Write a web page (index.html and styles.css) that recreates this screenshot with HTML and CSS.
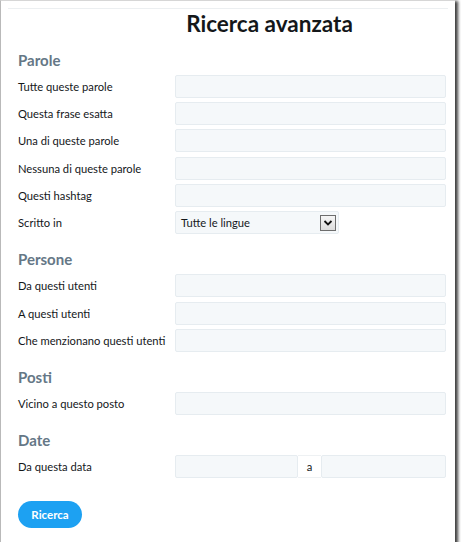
FILE: index.html
```html
<!DOCTYPE html>
<html lang="it">
<head>
<meta charset="utf-8">
<title>Ricerca avanzata</title>
<link rel="stylesheet" href="styles.css">
</head>
<body>
<div class="window">
  <div class="topline"></div>
  <h1 class="title">Ricerca avanzata</h1>

  <section class="section">
    <h2 class="heading">Parole</h2>
    <div class="rows">
      <label class="label">Tutte queste parole</label><div class="input"></div>
      <label class="label">Questa frase esatta</label><div class="input"></div>
      <label class="label">Una di queste parole</label><div class="input"></div>
      <label class="label">Nessuna di queste parole</label><div class="input"></div>
      <label class="label">Questi hashtag</label><div class="input"></div>
      <label class="label">Scritto in</label>
      <div class="select-wrap">
        <div class="select"><span class="select-text">Tutte le lingue</span><span class="arrow"><svg width="10" height="8" viewBox="0 0 10 8"><path d="M1.5 2 L5 5.5 L8.5 2" fill="none" stroke="#111" stroke-width="1.8"/></svg></span></div>
      </div>
    </div>
  </section>

  <section class="section">
    <h2 class="heading">Persone</h2>
    <div class="rows">
      <label class="label">Da questi utenti</label><div class="input"></div>
      <label class="label">A questi utenti</label><div class="input"></div>
      <label class="label">Che menzionano questi utenti</label><div class="input"></div>
    </div>
  </section>

  <section class="section">
    <h2 class="heading">Posti</h2>
    <div class="rows">
      <label class="label">Vicino a questo posto</label><div class="input"></div>
    </div>
  </section>

  <section class="section">
    <h2 class="heading">Date</h2>
    <div class="rows">
      <label class="label">Da questa data</label>
      <div class="daterow"><div class="input date-a"></div><span class="sep">a</span><div class="input date-b"></div></div>
    </div>
  </section>

  <div class="actions"><button class="btn" type="button">Ricerca</button></div>
</div>
</body>
</html>
```
FILE: styles.css
```css
html, body {
  margin: 0;
  padding: 0;
  background: #ffffff;
}
body {
  font-family: Lato, "Open Sans", sans-serif;
  color: #14171a;
}
.window {
  box-sizing: border-box;
  width: 455px;
  height: 542px;
  background: #fff;
  border-left: 1px solid #b9b9b9;
  border-top: 1px solid #d6d6d6;
  box-shadow: 2px 2px 3px 1px rgba(0, 0, 0, 0.75);
  padding-top: 7px;
}
.topline {
  margin: 0 7px 0 7px;
  height: 0;
  border-top: 1px solid #eceff1;
}
.title {
  margin: 0 0 0 7px;
  padding-left: 83px;
  text-align: center;
  font-size: 22.5px;
  line-height: 30px;
  font-weight: 700;
  color: #14171a;
  width: 440px;
  box-sizing: border-box;
}
.section {
  padding-left: 17px;
  margin-top: 15.8px;
}
.section:first-of-type { margin-top: 11.5px; }
.heading {
  margin: 0 0 6px 0;
  font-size: 15px;
  line-height: 18px;
  font-weight: 700;
  color: #657786;
}
.rows {
  display: grid;
  grid-template-columns: 157px 271px;
  grid-auto-rows: 23px;
  row-gap: 4.4px;
  align-items: center;
}
.label {
  font-size: 11.2px;
  line-height: 23px;
  color: #14171a;
  white-space: nowrap;
}
.input {
  box-sizing: border-box;
  height: 23px;
  background: #f5f8fa;
  border: 1px solid #e6ecf0;
  border-radius: 2px;
}
.select-wrap { display: flex; }
.select {
  box-sizing: border-box;
  width: 164px;
  height: 23px;
  background: #f5f8fa;
  border: 1px solid #e6ecf0;
  border-radius: 2px;
  display: flex;
  align-items: center;
  justify-content: space-between;
  padding: 0 2px 0 5px;
  font-size: 11.2px;
}
.arrow {
  box-sizing: border-box;
  width: 16px;
  height: 16px;
  border: 1px solid #6d6d6d;
  background: linear-gradient(#f6f6f6, #dcdcdc);
  display: flex;
  align-items: center;
  justify-content: center;
}
.daterow {
  display: flex;
  align-items: stretch;
}
.date-a { width: 123px; }
.date-b { flex: 1; }
.sep {
  box-sizing: border-box;
  width: 23px;
  height: 23px;
  border-top: 1px solid #eef1f3;
  border-bottom: 1px solid #eef1f3;
  font-size: 11.2px;
  line-height: 21px;
  text-align: center;
  background: #fff;
}
.actions {
  padding-left: 17px;
  margin-top: 23.5px;
}
.btn {
  font-family: Lato, "Open Sans", sans-serif;
  width: 64px;
  height: 27px;
  border: 0;
  border-radius: 14px;
  background: #1da1f2;
  color: #fff;
  font-weight: 700;
  font-size: 11.5px;
  padding: 0;
}
```
